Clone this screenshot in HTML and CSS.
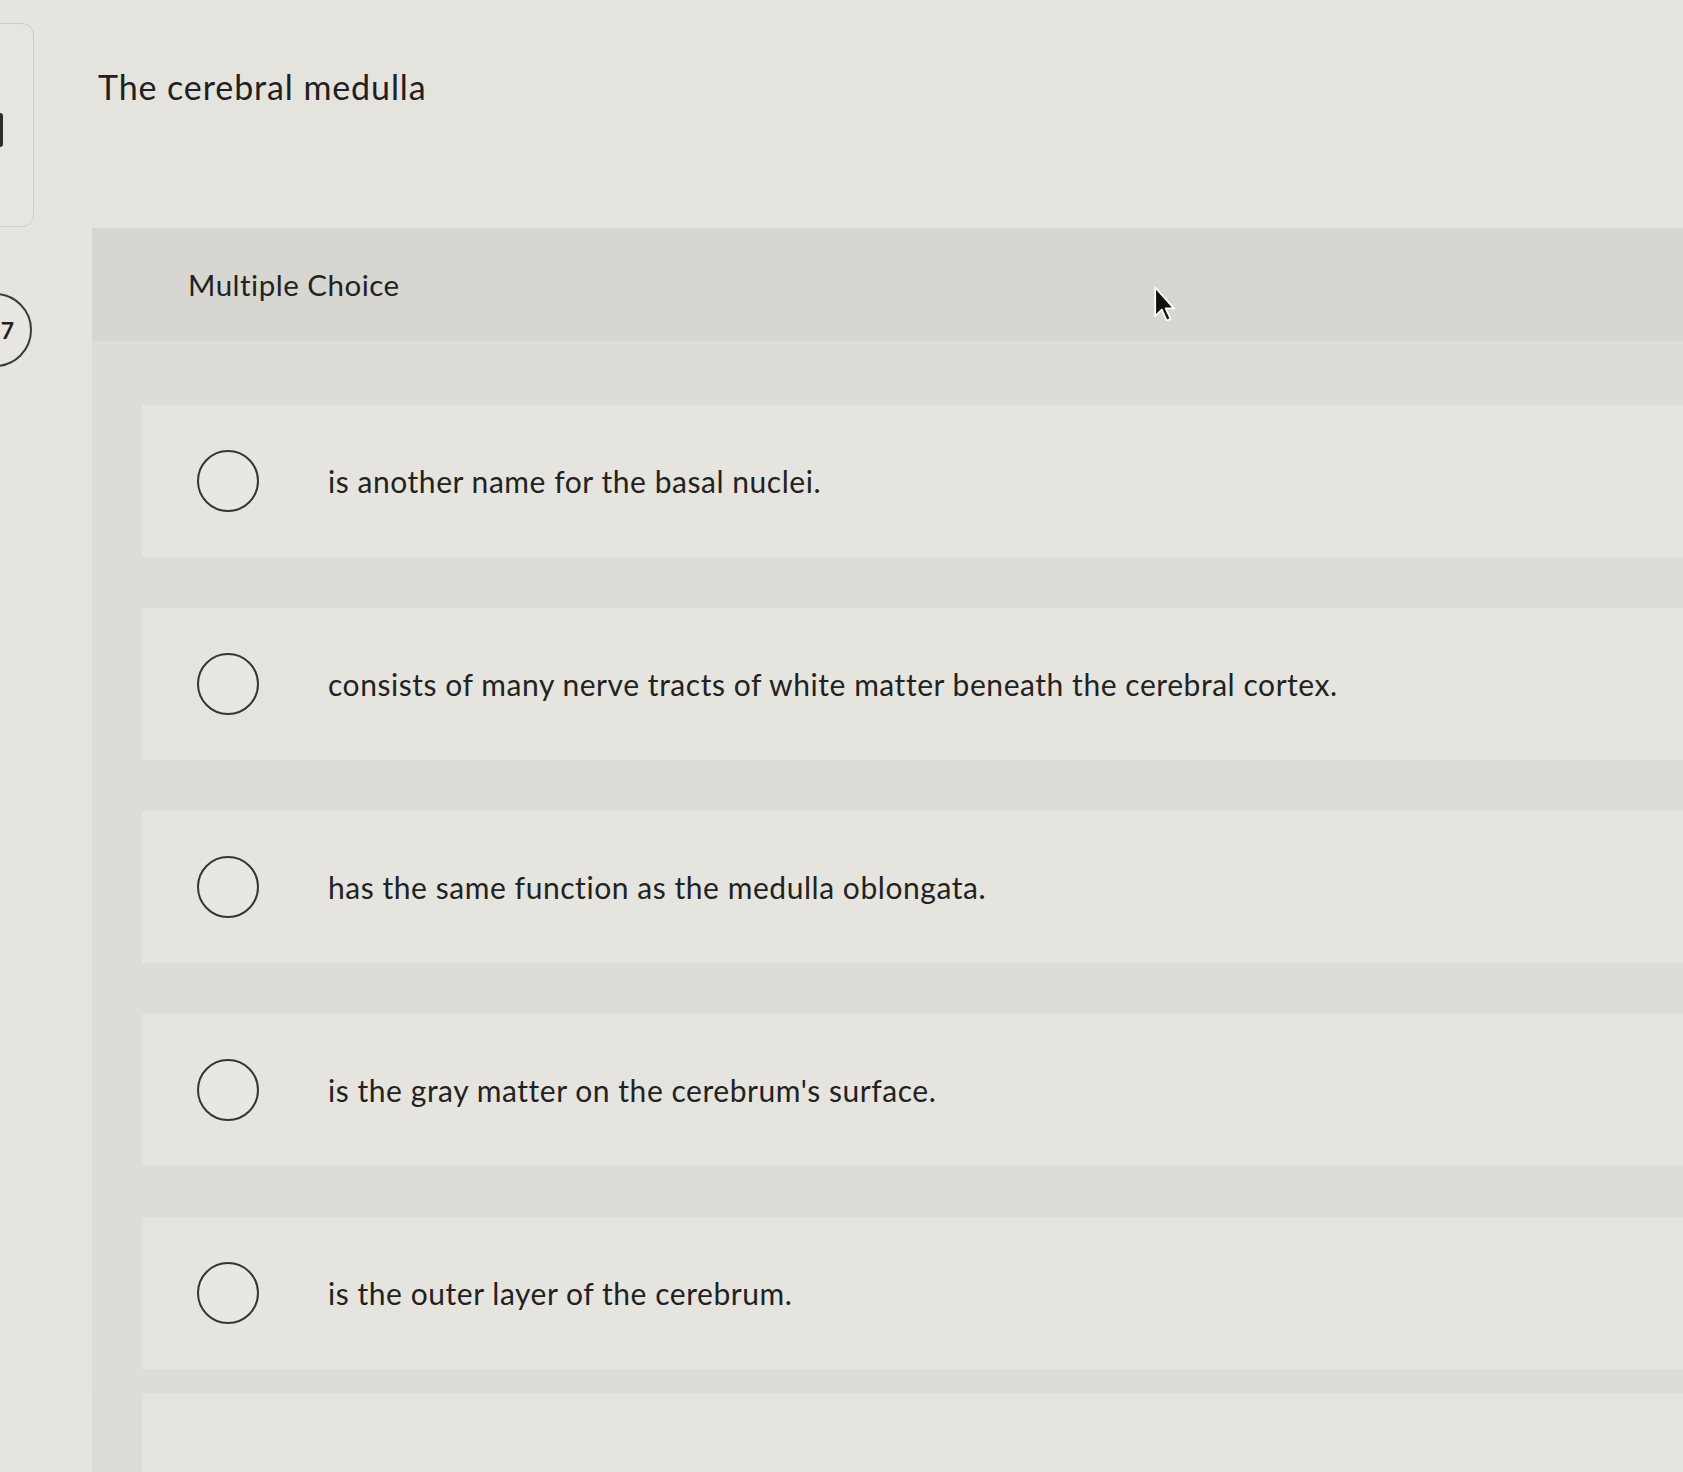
FILE: index.html
```html
<!DOCTYPE html>
<html lang="en">
<head>
<meta charset="utf-8">
<title>The cerebral medulla</title>
<link rel="stylesheet" href="styles.css">
</head>
<body>
<div class="page">
  <aside class="rail">
    <div class="nav-card"><span class="nav-mark"></span></div>
    <div class="qnum">7</div>
  </aside>
  <main class="main">
    <h1 class="title">The cerebral medulla</h1>
    <section class="question">
      <div class="qtype">Multiple Choice</div>
      <div class="answers">
        <label class="answer"><span class="radio"></span><span class="answer-text">is another name for the basal nuclei.</span></label>
        <label class="answer"><span class="radio"></span><span class="answer-text">consists of many nerve tracts of white matter beneath the cerebral cortex.</span></label>
        <label class="answer"><span class="radio"></span><span class="answer-text">has the same function as the medulla oblongata.</span></label>
        <label class="answer"><span class="radio"></span><span class="answer-text">is the gray matter on the cerebrum's surface.</span></label>
        <label class="answer"><span class="radio"></span><span class="answer-text">is the outer layer of the cerebrum.</span></label>
      </div>
      <div class="answers-end"></div>
    </section>
  </main>
  <svg class="cursor" width="22" height="38" viewBox="0 0 20 34" aria-hidden="true">
    <path d="M2 2 L2 28 L8 22 L12.5 32 L16 30.5 L11.5 21 L19 21 Z" fill="#111" stroke="#fff" stroke-width="1.6" stroke-linejoin="round"/>
  </svg>
</div>
</body>
</html>
```

FILE: styles.css
```css
html, body {
  margin: 0;
  padding: 0;
}

body {
  background: #e5e3de;
  font-family: Lato, "Open Sans", "Liberation Sans", sans-serif;
  color: #222;
  overflow: hidden;
}

.page {
  position: relative;
  display: flex;
  width: 1683px;
  min-height: 1472px;
}

.rail {
  flex: 0 0 92px;
  width: 92px;
  overflow: hidden;
  background: #e6e4df;
}

.nav-card {
  position: relative;
  box-sizing: border-box;
  width: 56px;
  height: 204px;
  margin-top: 23px;
  margin-left: -22px;
  border: 1.5px solid #cfcdc8;
  border-radius: 12px;
  background: #e7e5e0;
}

.nav-mark {
  display: block;
  width: 4px;
  height: 34px;
  margin-top: 89px;
  margin-left: 20px;
  background: #2d2d2d;
  border-radius: 0 3px 3px 0;
}

.qnum {
  box-sizing: border-box;
  width: 74px;
  height: 74px;
  margin-top: 66px;
  margin-left: -42px;
  border: 2px solid #3a3a3a;
  border-radius: 50%;
  background: #e8e6e2;
  display: flex;
  align-items: center;
  justify-content: flex-end;
  padding-right: 16px;
  font-size: 23px;
  font-weight: 700;
  color: #222;
}

.main {
  flex: 1;
  min-width: 0;
}

.title {
  margin: 67px 0 0 6px;
  font-size: 34px;
  line-height: 40px;
  font-weight: 400;
  color: #202020;
  letter-spacing: 0.9px;
}

.question {
  margin-top: 121px;
  background: #dddbd6;
}

.qtype {
  height: 113px;
  display: flex;
  align-items: center;
  padding-left: 96px;
  background: #d8d6d1;
  font-size: 29.5px;
  letter-spacing: 0.5px;
  color: #222;
}

.answers {
  display: flex;
  flex-direction: column;
  gap: 51px;
  padding: 64px 0 24px 50px;
  background: #dedcd7;
}

.answer {
  height: 152px;
  display: flex;
  align-items: center;
  padding-left: 55px;
  background: #e6e4df;
}

.radio {
  box-sizing: border-box;
  flex: 0 0 62px;
  width: 62px;
  height: 62px;
  border: 2.5px solid #353535;
  border-radius: 50%;
  background: #e9e7e3;
}

.answer-text {
  margin-left: 69px;
  font-size: 30px;
  letter-spacing: 0.55px;
  color: #222;
}

.answers-end {
  height: 120px;
  margin-left: 50px;
  background: #e5e3de;
}

.cursor {
  position: absolute;
  left: 1153px;
  top: 285px;
}
```
